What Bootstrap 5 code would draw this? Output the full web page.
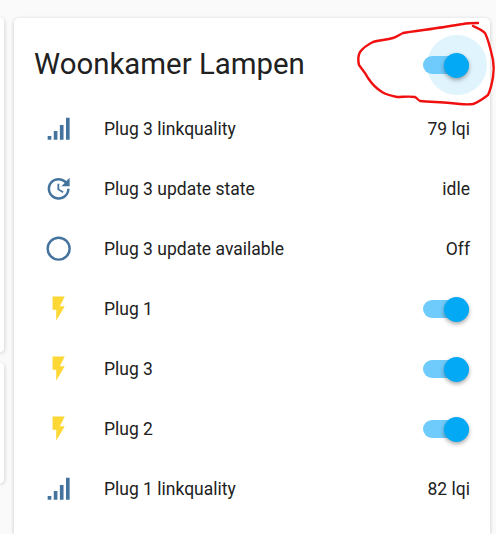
<!DOCTYPE html>
<html lang="nl">
<head>
  <meta charset="UTF-8">
  <title>Woonkamer Lampen</title>
  <link href="https://cdn.jsdelivr.net/npm/bootstrap@5.3.0/dist/css/bootstrap.min.css" rel="stylesheet">
  <style>
    html, body { height: 534px; overflow: hidden; }
    body { background: #fafafa; font-family: Roboto, sans-serif; color: #212121; position: relative; }
    .page-wrap { padding-top: 18px; }
    .side-col { width: 4px; margin-right: 10px; flex: none; }
    .side-stub { background: #fff; border-radius: 0 5px 5px 0; box-shadow: 0 1px 4px rgba(0,0,0,.22); }
    .stub-top { height: 334px; margin-bottom: 11px; }
    .stub-bottom { height: 120px; }
    .main-card { width: 476px; height: 516px; flex: none; border: 0; border-radius: 5px 5px 0 0; box-shadow: 0 1px 4px rgba(0,0,0,.2); }
    .card-head { height: 81px; padding: 13px 21px 0 20px; }
    .card-head h1 { font-size: 29.4px; font-weight: 400; line-height: 1; margin: 0; color: #212121; }
    .ent-row { height: 60px; padding-right: 20px; font-size: 17.5px; }
    .ent-icon { width: 90px; flex: none; padding-left: 30px; }
    .ent-icon svg { width: 29.3px; height: 29.3px; display: block; }
    .ic-blue { fill: #44739e; }
    .ic-yellow { fill: #fdd835; }
    .ent-name { flex: 1; }
    .toggle-sw { position: relative; display: block; width: 46px; height: 18px; flex: none; margin-right: 1px; background: #6fcbfb; border-radius: 9px; }
    .toggle-sw::after { content: ""; position: absolute; right: 0; top: -3.5px; width: 25px; height: 25px; border-radius: 50%; background: #03a9f4; box-shadow: 0 2px 4px rgba(0,0,0,.35); }
    .toggle-halo { background: transparent; margin-right: 0; }
    .toggle-halo::before { content: ""; position: absolute; right: -17.5px; top: -21px; width: 60px; height: 60px; border-radius: 50%; background: #e0f4fd; }
    .toggle-track { position: absolute; inset: 0; background: #6fcbfb; border-radius: 9px; }
    .scribble { position: absolute; left: 0; top: 0; width: 496px; height: 534px; pointer-events: none; }
  </style>
</head>
<body>
  <div class="page-wrap d-flex align-items-start">
    <div class="side-col">
      <div class="side-stub stub-top"></div>
      <div class="side-stub stub-bottom"></div>
    </div>
    <div class="card main-card">
      <div class="card-head d-flex align-items-center justify-content-between">
        <h1>Woonkamer Lampen</h1>
        <span class="toggle-sw toggle-halo"><span class="toggle-track"></span></span>
      </div>

      <div class="ent-row d-flex align-items-center">
        <div class="ent-icon"><svg viewBox="0 0 24 24" class="ic-blue"><path d="M3,21H6V18H3M8,21H11V14H8M13,21H16V9H13M18,21H21V3H18V21Z"/></svg></div>
        <div class="ent-name">Plug 3 linkquality</div>
        <div>79 lqi</div>
      </div>
      <div class="ent-row d-flex align-items-center">
        <div class="ent-icon"><svg viewBox="0 0 24 24" class="ic-blue"><path d="M21,10.12H14.22L16.96,7.3C14.23,4.6 9.81,4.5 7.08,7.2C4.35,9.91 4.35,14.28 7.08,17C9.81,19.7 14.23,19.7 16.96,17C18.32,15.65 19,14.08 19,12.1H21C21,14.08 20.12,16.65 18.36,18.39C14.85,21.87 9.15,21.87 5.64,18.39C2.14,14.92 2.11,9.28 5.62,5.81C9.13,2.34 14.76,2.34 18.27,5.81L21,3V10.12M12.5,8V12.25L16,14.33L15.28,15.54L11,13V8H12.5Z"/></svg></div>
        <div class="ent-name">Plug 3 update state</div>
        <div>idle</div>
      </div>
      <div class="ent-row d-flex align-items-center">
        <div class="ent-icon"><svg viewBox="0 0 24 24" class="ic-blue"><path d="M12,20A8,8 0 0,1 4,12A8,8 0 0,1 12,4A8,8 0 0,1 20,12A8,8 0 0,1 12,20M12,2A10,10 0 0,0 2,12A10,10 0 0,0 12,22A10,10 0 0,0 22,12A10,10 0 0,0 12,2Z"/></svg></div>
        <div class="ent-name">Plug 3 update available</div>
        <div>Off</div>
      </div>
      <div class="ent-row d-flex align-items-center">
        <div class="ent-icon"><svg viewBox="0 0 24 24" class="ic-yellow"><path d="M7,2V13H10V22L17,10H13L17,2H7Z"/></svg></div>
        <div class="ent-name">Plug 1</div>
        <span class="toggle-sw"></span>
      </div>
      <div class="ent-row d-flex align-items-center">
        <div class="ent-icon"><svg viewBox="0 0 24 24" class="ic-yellow"><path d="M7,2V13H10V22L17,10H13L17,2H7Z"/></svg></div>
        <div class="ent-name">Plug 3</div>
        <span class="toggle-sw"></span>
      </div>
      <div class="ent-row d-flex align-items-center">
        <div class="ent-icon"><svg viewBox="0 0 24 24" class="ic-yellow"><path d="M7,2V13H10V22L17,10H13L17,2H7Z"/></svg></div>
        <div class="ent-name">Plug 2</div>
        <span class="toggle-sw"></span>
      </div>
      <div class="ent-row d-flex align-items-center">
        <div class="ent-icon"><svg viewBox="0 0 24 24" class="ic-blue"><path d="M3,21H6V18H3M8,21H11V14H8M13,21H16V9H13M18,21H21V3H18V21Z"/></svg></div>
        <div class="ent-name">Plug 1 linkquality</div>
        <div>82 lqi</div>
      </div>
    </div>
  </div>

  <svg class="scribble" viewBox="0 0 496 534" fill="none" stroke="#f01010" stroke-width="2.4" stroke-linejoin="round" stroke-linecap="round">
    <path d="M478,23 C472,23 468,23 463,24 C455,25 446,27 437,28 C426,30 414,31 403,33 C399,35 397,37 393,38 C386,40 379,40 373,42 C367,45 363,48 360,52 C358,56 358,61 359,65 C361,68 365,72 368,78 C372,84 377,89 382,92 C387,95 392,96 397,97 C403,97 409,96 415,97 C417,98 418,100 420,101 C430,102 440,102 450,103 C458,104 466,105 473,104 C479,102 484,98 488,95 C491,89 492,83 493,77 C494,71 494,66 493,60 C491,51 489,41 485,33 C482,30 477,28 473,26"/>
  </svg>

  <script src="https://cdn.jsdelivr.net/npm/bootstrap@5.3.0/dist/js/bootstrap.bundle.min.js"></script>
</body>
</html>
